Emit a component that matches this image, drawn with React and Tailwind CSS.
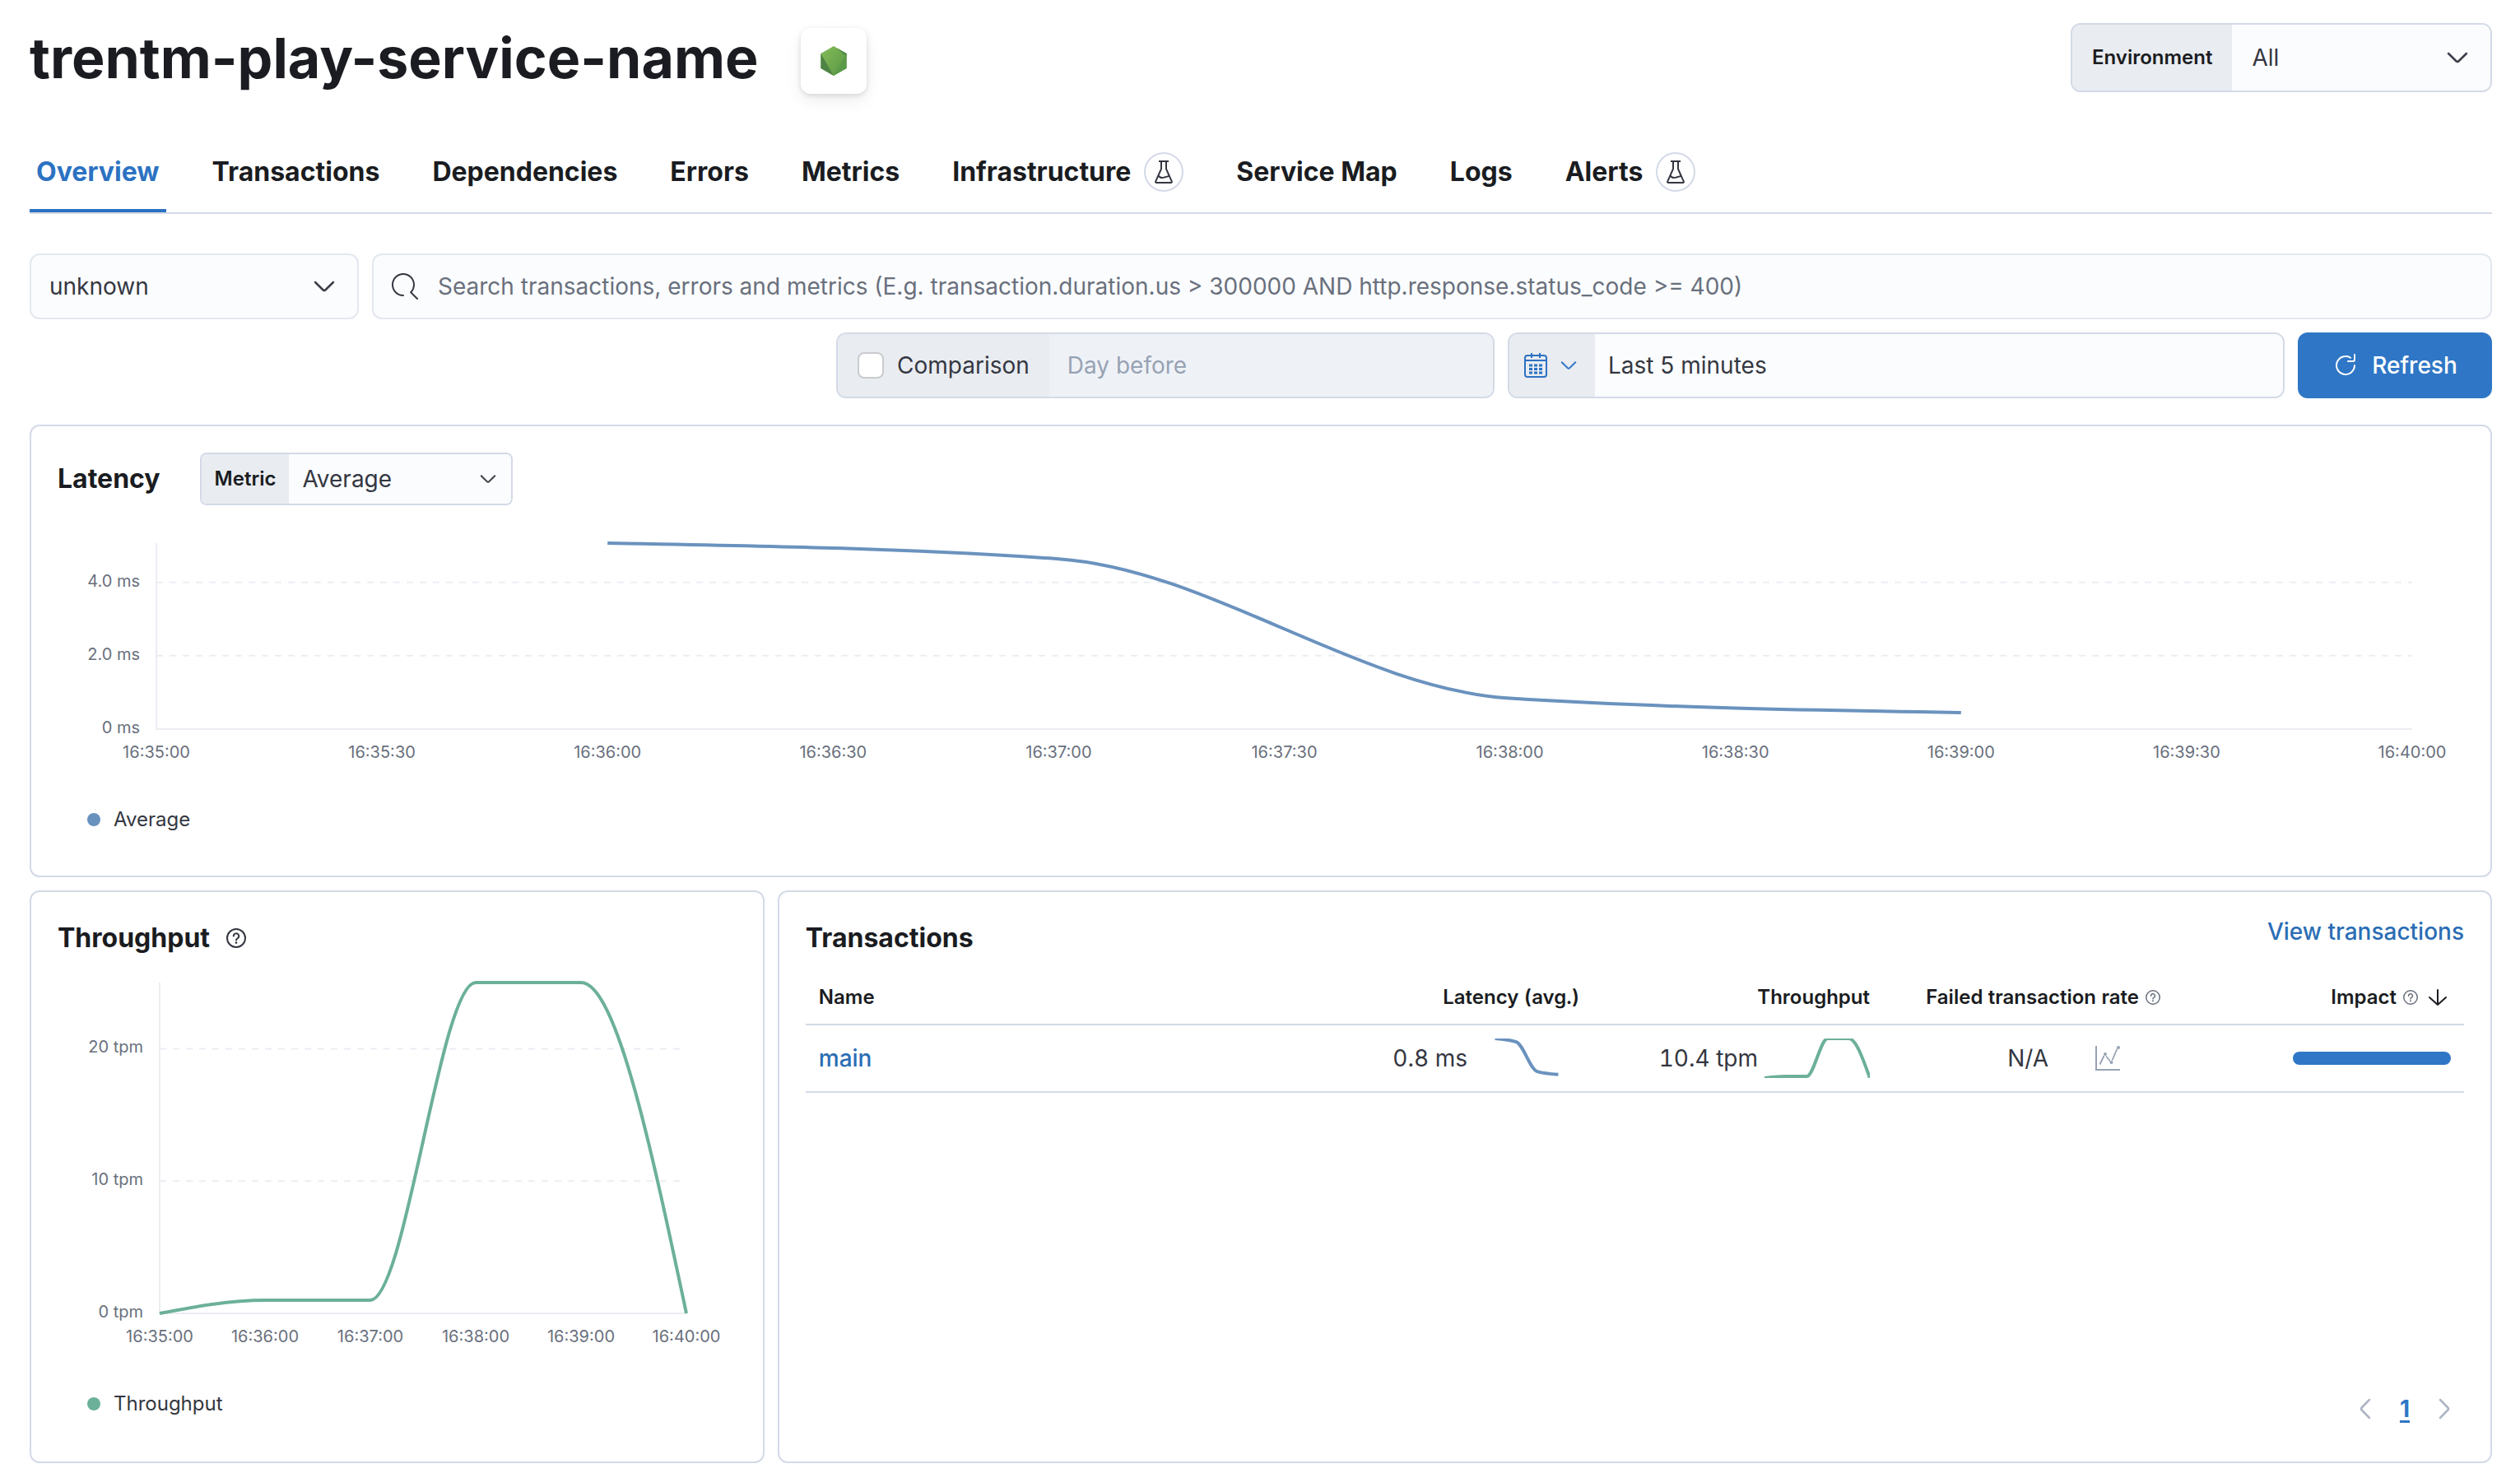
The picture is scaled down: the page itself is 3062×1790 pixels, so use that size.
import { useLayoutEffect, useRef, useState } from 'react';
import clsx from 'clsx';

const TABS = [
  { name: 'Overview', active: true },
  { name: 'Transactions' },
  { name: 'Dependencies' },
  { name: 'Errors' },
  { name: 'Metrics' },
  { name: 'Infrastructure', beta: true },
  { name: 'Service Map' },
  { name: 'Logs' },
  { name: 'Alerts', beta: true },
];

// x is minutes since 16:35:00
const LATENCY = [[1, 5.07], [2, 4.64], [3, 0.84], [4, 0.45]];
const THROUGHPUT = [[0, 0], [1, 1], [2, 1], [3, 25], [4, 25], [5, 0]];

const BLUE = '#6a92be';
const GREEN = '#6cb09a';

// Monotone cubic interpolation, same idea as d3.curveMonotoneX
const monotonePath = (points) => {
  const n = points.length;
  const slope = [];
  for (let i = 0; i < n - 1; i++) {
    slope.push((points[i + 1][1] - points[i][1]) / (points[i + 1][0] - points[i][0]));
  }
  const t = new Array(n).fill(0);
  for (let i = 1; i < n - 1; i++) {
    const h0 = points[i][0] - points[i - 1][0];
    const h1 = points[i + 1][0] - points[i][0];
    const s0 = slope[i - 1];
    const s1 = slope[i];
    const p = (s0 * h1 + s1 * h0) / (h0 + h1);
    t[i] = (Math.sign(s0) + Math.sign(s1)) * Math.min(Math.abs(s0), Math.abs(s1), 0.5 * Math.abs(p)) || 0;
  }
  t[0] = (3 * slope[0] - t[1]) / 2;
  t[n - 1] = (3 * slope[n - 2] - t[n - 2]) / 2;

  let d = `M${points[0][0]},${points[0][1]}`;
  for (let i = 0; i < n - 1; i++) {
    const [x0, y0] = points[i];
    const [x1, y1] = points[i + 1];
    const dx = (x1 - x0) / 3;
    d += `C${x0 + dx},${y0 + dx * t[i]} ${x1 - dx},${y1 - dx * t[i + 1]} ${x1},${y1}`;
  }
  return d;
};

const ChevronIcon = ({ className }) => (
  <svg viewBox="0 0 16 16" fill="currentColor" stroke="currentColor" strokeWidth="0.3" className={className} aria-hidden="true">
    <path d="M13.069 5.157 8.384 9.768a.546.546 0 0 1-.768 0L2.93 5.158a.552.552 0 0 0-.771 0 .53.53 0 0 0 0 .759l4.684 4.61c.641.631 1.672.63 2.312 0l4.684-4.61a.53.53 0 0 0 0-.76.552.552 0 0 0-.771 0Z" />
  </svg>
);

const SearchIcon = ({ className }) => (
  <svg viewBox="0 0 16 16" fill="currentColor" className={className} aria-hidden="true">
    <path d="m11.271 11.978 3.872 3.873a.502.502 0 0 0 .708 0 .502.502 0 0 0 0-.708l-3.565-3.564c2.38-2.747 2.267-6.923-.342-9.532-2.73-2.73-7.17-2.73-9.898 0-2.728 2.729-2.728 7.17 0 9.9a6.955 6.955 0 0 0 4.949 2.05.5.5 0 0 0 0-1 5.96 5.96 0 0 1-4.242-1.757 6.01 6.01 0 0 1 0-8.486 6.004 6.004 0 0 1 8.484 0 6.01 6.01 0 0 1 0 8.486.5.5 0 0 0 .034.738Z" />
  </svg>
);

const BeakerIcon = () => (
  <svg viewBox="0 0 16 16" fill="currentColor" className="size-8" aria-hidden="true">
    <path d="M5.277 10.088c.02.014.04.03.057.047.582.55 1.134.812 1.666.812.586 0 1.84-.293 3.713-.88L9 6.212V2H7v4.212l-1.723 3.876Zm-.438.987L3.539 14h8.922l-1.32-2.969C9.096 11.677 7.733 12 7 12c-.74 0-1.463-.315-2.161-.925ZM6 2H5V1h6v1h-1v4l3.375 7.594A1 1 0 0 1 12.461 15H3.54a1 1 0 0 1-.914-1.406L6 6V2Z" />
  </svg>
);

const RefreshIcon = () => (
  <svg viewBox="0 0 16 16" fill="currentColor" className="size-8" aria-hidden="true">
    <path d="M11.228 2.942a.5.5 0 1 1-.538.842A5 5 0 1 0 13 8a.5.5 0 1 1 1 0 6 6 0 1 1-2.772-5.058ZM14 1.5v3A1.5 1.5 0 0 1 12.5 6h-3a.5.5 0 0 1 0-1h3a.5.5 0 0 0 .5-.5v-3a.5.5 0 1 1 1 0Z" />
  </svg>
);

const CalendarIcon = () => (
  <svg viewBox="0 0 28 30" fill="none" stroke="currentColor" strokeWidth="2" className="h-[30px] w-7" aria-hidden="true">
    <rect x="1" y="3" width="26" height="26" rx="3" />
    <path d="M1 9h26M9 0v6M19 0v6" />
    <path d="M6 15h16M6 19.5h16M6 24h16" strokeWidth="3" strokeDasharray="4 2" />
  </svg>
);

const QuestionIcon = ({ className }) => (
  <svg viewBox="0 0 24 24" fill="none" stroke="currentColor" strokeWidth="2" className={className} aria-hidden="true">
    <circle cx="12" cy="12" r="11" />
    <path d="M8.8 9.6a3.2 3.2 0 1 1 4.8 2.7c-1 .6-1.6 1.1-1.6 2.3" strokeLinecap="round" />
    <circle cx="12" cy="17.6" r="1.3" fill="currentColor" stroke="none" />
  </svg>
);

const SortDownIcon = () => (
  <svg viewBox="0 0 32 32" fill="none" stroke="currentColor" strokeWidth="2" strokeLinecap="round" strokeLinejoin="round" className="size-8" aria-hidden="true">
    <path d="M16 7v18M6 16l10 9 10-9" />
  </svg>
);

const LineChartIcon = () => (
  <svg viewBox="0 0 30 30" fill="none" stroke="#98a2b3" className="size-[30px]" aria-hidden="true">
    <path d="M1 0v29h29" strokeWidth="2" />
    <path d="M5.5 22.5l5-10.5M13 12.5l5 6M20.5 17.5l6-14" strokeWidth="1.8" />
    <g fill="#98a2b3" stroke="none">
      <circle cx="12" cy="10" r="2" />
      <circle cx="19.5" cy="20" r="2" />
      <circle cx="28" cy="2" r="2" />
    </g>
  </svg>
);

const NodeIcon = () => (
  <svg viewBox="0 0 32 36" className="h-9 w-8" aria-hidden="true">
    <defs>
      <linearGradient id="node-light" x1="0" y1="0" x2="1" y2="1">
        <stop offset="0" stopColor="#83bd59" />
        <stop offset="1" stopColor="#5b9544" />
      </linearGradient>
    </defs>
    <path d="M16 0l15.6 9v18L16 36 .4 27V9z" fill="url(#node-light)" />
    <path d="M.4 9L16 36 .4 27z" fill="#4f8345" />
    <path d="M20 2.400L31.600 9v4z" fill="#4f8a47" />
    <path d="M31.600 9v18L16 36z" fill="#5a9a48" />
  </svg>
);

const Select = ({ id, value, className, selectClass, small, hideArrow, disabled }) => (
  <div className={clsx('relative flex items-center', className)}>
    <select
      id={id}
      aria-label={value}
      disabled={disabled}
      defaultValue={value}
      className={clsx('h-full w-full appearance-none bg-transparent text-[28px] opacity-100 outline-none', selectClass)}
    >
      <option>{value}</option>
    </select>
    {!hideArrow && (
      <ChevronIcon
        className={clsx('pointer-events-none absolute', small ? 'right-4 size-6' : 'right-6 size-8')}
      />
    )}
  </div>
);

const Panel = ({ children, className }) => (
  <section className={clsx('min-w-0 rounded-xl border-2 border-[#d3dae6] bg-white p-8', className)}>
    {children}
  </section>
);

const PanelTitle = ({ children }) => (
  <h2 className="text-[32px] leading-[48px] font-bold text-[#1a1c21]">{children}</h2>
);

const LineChart = ({ data, max, yTicks, xTicks, color, left, right, plotHeight, label }) => {
  const ref = useRef(null);
  const [width, setWidth] = useState(0);

  useLayoutEffect(() => {
    const measure = () => setWidth(ref.current.clientWidth);
    measure();
    const observer = new ResizeObserver(measure);
    observer.observe(ref.current);
    return () => observer.disconnect();
  }, []);

  const top = 14;
  const bottom = top + plotHeight;
  const plotWidth = Math.max(width - left - right, 10);
  const x = (v) => left + (v / 5) * plotWidth;
  const y = (v) => bottom - (v / max) * plotHeight;

  return (
    <div ref={ref} className="w-full">
      <svg width={width} height={bottom + 60} role="img" aria-label={label} className="block">
        <g stroke="#eceef3" strokeWidth="2" fill="none">
          {yTicks.slice(1).map((tick) => (
            <path key={tick.value} d={`M${left} ${y(tick.value)}H${left + plotWidth}`} strokeDasharray="8 8" />
          ))}
          <path d={`M${left} ${top}V${bottom}H${left + plotWidth}`} />
        </g>
        <g className="fill-[#69707d] text-[20px]">
          {yTicks.map((tick) => (
            <text key={tick.value} x={left - 20} y={y(tick.value) + 5} textAnchor="end">
              {tick.label}
            </text>
          ))}
          {xTicks.map((tick, i) => (
            <text key={tick} x={x((i * 5) / (xTicks.length - 1))} y={bottom + 35} textAnchor="middle">
              {tick}
            </text>
          ))}
        </g>
        <path
          d={monotonePath(data.map(([a, b]) => [x(a), y(b)]))}
          fill="none"
          stroke={color}
          strokeWidth="4"
        />
      </svg>
    </div>
  );
};

const Legend = ({ name, dotClass }) => (
  <div className="mt-[34px] flex items-center gap-4 pb-5 pl-9 text-2xl leading-8">
    <span className={clsx('size-4 rounded-full', dotClass)} />
    <span>{name}</span>
  </div>
);

const Sparkline = ({ data, max, color }) => (
  <svg viewBox="0 0 128 48" className="h-12 w-32 shrink-0" aria-hidden="true">
    <path
      d={monotonePath(data.map(([a, b]) => [(a / 5) * 128, 48 - (b / max) * 48]))}
      fill="none"
      stroke={color}
      strokeWidth="4"
    />
  </svg>
);

const TransactionsTable = () => (
  <table className="mt-4 w-full table-fixed border-separate border-spacing-0 tabular-nums">
    <thead>
      <tr className="text-2xl text-[#1a1c21] *:h-[66px] *:border-b-2 *:border-[#d3dae6] *:px-4 *:py-0 *:font-semibold">
        <th className="text-left">Name</th>
        <th className="w-[353px] text-right">Latency (avg.)</th>
        <th className="w-[353px] text-right">Throughput</th>
        <th className="w-[353px] text-right">
          <span className="flex items-center justify-end gap-2 whitespace-nowrap">
            Failed transaction rate <QuestionIcon className="size-[18px] text-[#69707d]" />
          </span>
        </th>
        <th className="w-[353px] text-right" aria-sort="descending">
          <button className="ml-auto flex items-center gap-2 font-semibold">
            Impact <QuestionIcon className="size-[18px] text-[#69707d]" />
            <SortDownIcon />
          </button>
        </th>
      </tr>
    </thead>
    <tbody>
      <tr className="text-[28px] *:h-[82px] *:border-b-2 *:border-[#d3dae6] *:px-4 *:py-0">
        <td>
          <a href="#main" className="font-medium text-[#2a6db4]">main</a>
        </td>
        <td>
          <div className="flex items-center justify-end gap-2">
            0.8 ms <Sparkline data={LATENCY} max={5.07} color={BLUE} />
          </div>
        </td>
        <td>
          <div className="flex items-center justify-end gap-2">
            10.4 tpm <Sparkline data={THROUGHPUT} max={25} color={GREEN} />
          </div>
        </td>
        <td>
          <div className="flex items-center justify-end gap-2">
            N/A
            <span className="flex w-32 justify-center">
              <LineChartIcon />
            </span>
          </div>
        </td>
        <td>
          <div className="ml-auto h-4 w-48 rounded-lg bg-[#2f77c6]" />
        </td>
      </tr>
    </tbody>
  </table>
);

export default function App() {
  return (
    <div className="min-h-screen bg-white pt-7 pr-[34px] pb-3 pl-9 font-['Inter',sans-serif] text-[#343741]">
      <header className="flex items-start justify-between">
        <div className="flex items-start gap-13">
          <h1 className="text-[68px] leading-[84px] font-bold text-[#1a1c21]">trentm-play-service-name</h1>
          <span className="mt-1.5 flex size-20 items-center justify-center rounded-xl bg-white shadow-[0_2px_6px_rgba(0,0,0,0.12),0_8px_20px_rgba(0,0,0,0.07)]">
            <NodeIcon />
          </span>
        </div>
        <div className="flex h-[84px] w-[512px] overflow-hidden rounded-xl border-2 border-[#d3dae6]">
          <label htmlFor="environment" className="flex items-center bg-[#e9ecf1] px-6 text-2xl font-semibold text-[#1a1c21]">
            Environment
          </label>
          <Select id="environment" value="All" className="flex-1 bg-[#fbfcfe]" selectClass="pl-6" />
        </div>
      </header>

      <nav className="mt-[50px] flex gap-12 border-b-2 border-[#d3dae6]">
        {TABS.map((tab) => (
          <a
            key={tab.name}
            href={`#${tab.name}`}
            className={clsx(
              'flex h-[94px] items-center gap-4 border-b-4 px-2 text-[32px] font-bold',
              tab.active ? 'border-[#2c72c2] text-[#2c72c2]' : 'border-transparent text-[#1a1c21]'
            )}
          >
            {tab.name}
            {tab.beta && (
              <span className="flex size-12 items-center justify-center rounded-full border-2 border-[#d3dae6] text-[#343741]">
                <BeakerIcon />
              </span>
            )}
          </a>
        ))}
      </nav>

      <div className="mt-12 flex h-20 gap-4">
        <div className="flex w-[400px] rounded-xl border-2 border-[#e3e7ef] bg-[#fbfcfe]">
          <Select id="transaction-type" value="unknown" className="flex-1" selectClass="pl-[22px]" />
        </div>
        <label className="flex flex-1 items-center gap-6 rounded-xl border-2 border-[#e3e7ef] bg-[#fbfcfe] px-[22px]">
          <SearchIcon className="size-8 shrink-0" />
          <input
            type="text"
            aria-label="Search"
            placeholder="Search transactions, errors and metrics (E.g. transaction.duration.us > 300000 AND http.response.status_code >= 400)"
            className="h-full min-w-0 flex-1 bg-transparent text-[28px] outline-none placeholder:text-[#69707d]"
          />
        </label>
      </div>

      <div className="mt-4 flex h-20 justify-end gap-4">
        <div className="flex w-[800px] overflow-hidden rounded-xl border-2 border-[#d3dae6]">
          <label className="flex items-center gap-4 bg-[#e9ecf1] px-6 text-[28px]">
            <input type="checkbox" className="size-8 appearance-none rounded-lg border-2 border-[#cacbce] bg-white" />
            Comparison
          </label>
          <Select
            id="comparison-range"
            value="Day before"
            disabled
            hideArrow
            className="flex-1 bg-[#eef2f7]"
            selectClass="pl-[22px] text-[#98a2b3]"
          />
        </div>
        <div className="flex w-[944px] overflow-hidden rounded-xl border-2 border-[#d3dae6]">
          <button aria-label="Date quick select" className="flex items-center gap-3.5 bg-[#e9ecf1] pr-5 pl-[18px] text-[#2c72c2]">
            <CalendarIcon />
            <ChevronIcon className="size-6" />
          </button>
          <button className="flex-1 bg-[#fbfcfe] pl-4 text-left text-[28px]">Last 5 minutes</button>
        </div>
        <button className="flex w-[236px] items-center justify-center gap-4 rounded-xl bg-[#2f77c6] text-[28px] font-medium text-white">
          <RefreshIcon />
          Refresh
        </button>
      </div>

      <Panel className="mt-8">
        <div className="flex h-16 items-center gap-12">
          <PanelTitle>Latency</PanelTitle>
          <div className="flex h-16 w-[380px] overflow-hidden rounded-lg border-2 border-[#d3dae6]">
            <label htmlFor="metric" className="flex items-center bg-[#e9ecf1] px-4 text-2xl font-semibold text-[#1a1c21]">
              Metric
            </label>
            <Select id="metric" value="Average" small className="flex-1 bg-[#fbfcfe]" selectClass="pl-4" />
          </div>
        </div>
        <div className="mt-8">
          <LineChart
            label="Latency"
            data={LATENCY}
            max={5.07}
            color={BLUE}
            left={120}
            right={63}
            plotHeight={226}
            yTicks={[
              { value: 0, label: '0 ms' },
              { value: 2, label: '2.0 ms' },
              { value: 4, label: '4.0 ms' },
            ]}
            xTicks={[
              '16:35:00', '16:35:30', '16:36:00', '16:36:30', '16:37:00', '16:37:30',
              '16:38:00', '16:38:30', '16:39:00', '16:39:30', '16:40:00',
            ]}
          />
        </div>
        <Legend name="Average" dotClass="bg-[#6a92be]" />
      </Panel>

      <div className="mt-4 grid min-h-[696px] grid-cols-[minmax(0,3fr)_minmax(0,7fr)] gap-4">
        <Panel>
          <div className="flex items-center gap-5">
            <PanelTitle>Throughput</PanelTitle>
            <QuestionIcon className="size-6" />
          </div>
          <div className="mt-4">
            <LineChart
              label="Throughput"
              data={THROUGHPUT}
              max={25}
              color={GREEN}
              left={124}
              right={61}
              plotHeight={402}
              yTicks={[
                { value: 0, label: '0 tpm' },
                { value: 10, label: '10 tpm' },
                { value: 20, label: '20 tpm' },
              ]}
              xTicks={['16:35:00', '16:36:00', '16:37:00', '16:38:00', '16:39:00', '16:40:00']}
            />
          </div>
          <Legend name="Throughput" dotClass="bg-[#6cb09a]" />
        </Panel>

        <Panel className="flex flex-col">
          <div className="flex items-start justify-between">
            <PanelTitle>Transactions</PanelTitle>
            <a href="#transactions" className="text-[28px] leading-8 font-medium text-[#2a6db4]">
              View transactions
            </a>
          </div>
          <TransactionsTable />
          <div className="mt-auto flex h-16 items-center justify-end text-[28px]">
            <button aria-label="Previous page" className="flex w-12 justify-center text-[#a9b1c2]">
              <ChevronIcon className="size-8 rotate-90" />
            </button>
            <button className="w-12 font-bold text-[#2f77c6] underline decoration-[3px] underline-offset-4">1</button>
            <button aria-label="Next page" className="flex w-12 justify-center text-[#a9b1c2]">
              <ChevronIcon className="size-8 -rotate-90" />
            </button>
          </div>
        </Panel>
      </div>
    </div>
  );
}
